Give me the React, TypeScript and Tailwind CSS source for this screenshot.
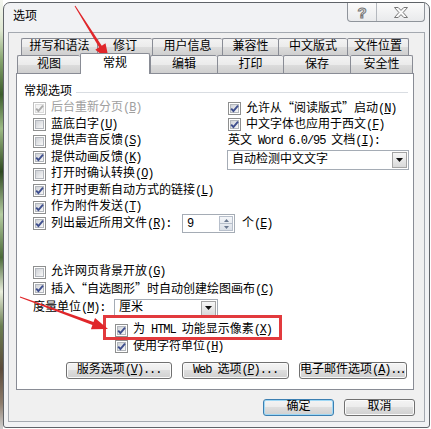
import type { ReactNode } from 'react';

const TOP_TABS = [
  { label: '拼写和语法', cls: 'w-[76px]' },
  { label: '修订', cls: 'w-[55px]' },
  { label: '用户信息', cls: 'w-[70px]' },
  { label: '兼容性', cls: 'w-[56px]' },
  { label: '中文版式', cls: 'w-[69px]' },
  { label: '文件位置', cls: 'w-[62px] border-r' },
];

const FRONT_TABS = [
  { label: '视图', cls: 'w-[63px]' },
  { label: '常规', cls: 'w-[70px]', active: true },
  { label: '编辑', cls: 'w-[67px]' },
  { label: '打印', cls: 'w-[66px]' },
  { label: '保存', cls: 'w-[67px]' },
  { label: '安全性', cls: 'w-[63px] border-r' },
];

// half-width latin run, SimSun style
function Lat({ children }: { children: ReactNode }) {
  return <span className="whitespace-pre text-[12px] tracking-[-1.1px]">{children}</span>;
}

function Key({ k }: { k: string }) {
  return (
    <Lat>
      (<span className="underline underline-offset-[1px]">{k}</span>)
    </Lat>
  );
}

function Q({ children }: { children: ReactNode }) {
  return <span className="font-['Noto_Sans_CJK_SC',sans-serif]">{children}</span>;
}

function Check({ on, dim }: { on?: boolean; dim?: boolean }) {
  return (
    <span
      className={`relative flex h-[13px] w-[13px] shrink-0 items-center justify-center border bg-white ${
        dim ? 'border-[#c0c0c0]' : 'border-[#8e8f8f]'
      }`}
    >
      <span
        className={`h-[9px] w-[9px] border ${
          dim ? 'border-[#dcdcdc] bg-[#f4f4f4]' : 'border-[#b3b7bd] bg-[linear-gradient(135deg,#cfd2d7,#f8f8f8)]'
        }`}
      />
      {on && (
        <svg className="absolute left-0 top-0" width="11" height="11" viewBox="0 0 11 11">
          <path d="M2.2 5.6 L4.4 8 L9 2.6" fill="none" stroke={dim ? '#aaaaaa' : '#3f4f8e'} strokeWidth="1.9" />
        </svg>
      )}
    </span>
  );
}

function Row({
  on,
  dim,
  children,
  className = '',
}: {
  on?: boolean;
  dim?: boolean;
  children: ReactNode;
  className?: string;
}) {
  return (
    <div className={`flex h-[16.5px] items-center gap-[5px] ${className}`}>
      <Check on={on} dim={dim} />
      <span className={`whitespace-nowrap ${dim ? 'text-[#a0a0a0]' : ''}`}>{children}</span>
    </div>
  );
}

function Arrow() {
  return (
    <svg width="7" height="4" viewBox="0 0 7 4">
      <path d="M0 0H7L3.5 4Z" fill="#111" />
    </svg>
  );
}

function Combo({ value, className = '' }: { value: string; className?: string }) {
  return (
    <div className={`flex shrink-0 border border-[#a5acb5] bg-white ${className}`}>
      <span className="flex flex-1 items-center pl-[4px] whitespace-nowrap">{value}</span>
      <span className="m-px flex w-[15px] items-center justify-center border border-[#a4a4a4] bg-[linear-gradient(#f7f7f7,#d9d9d9)]">
        <Arrow />
      </span>
    </div>
  );
}

function Spin() {
  return (
    <div className="flex h-[19px] w-[53px] shrink-0 border border-[#a5acb5] bg-white">
      <span className="flex flex-1 items-center pl-[4px]">
        <Lat>9</Lat>
      </span>
      <span className="m-px flex w-[14px] flex-col border border-[#b7bfcb] bg-[linear-gradient(#f4f6f9,#dbe0e8)]">
        <span className="flex flex-1 items-center justify-center border-b border-[#b7bfcb]">
          <svg width="5" height="3" viewBox="0 0 5 3">
            <path d="M0 3H5L2.5 0Z" fill="#6a7890" />
          </svg>
        </span>
        <span className="flex flex-1 items-center justify-center">
          <svg width="5" height="3" viewBox="0 0 5 3">
            <path d="M0 0H5L2.5 3Z" fill="#6a7890" />
          </svg>
        </span>
      </span>
    </div>
  );
}

function Btn({ children, className = '', def }: { children: ReactNode; className?: string; def?: boolean }) {
  return (
    <div
      className={`h-[17px] shrink-0 overflow-hidden whitespace-nowrap rounded-[3px] border text-center leading-[15px] bg-[linear-gradient(#f4f4f4,#ececec_50%,#dedede_50%,#d0d0d0)] ${
        def ? 'border-[#3c7fb1] shadow-[inset_0_0_0_1px_#9fd8f5]' : 'border-[#707070] shadow-[inset_0_0_0_1px_#fbfbfb]'
      } ${className}`}
    >
      {children}
    </div>
  );
}

export default function App() {
  return (
    <div className="relative flex h-[429px] w-[431px] overflow-hidden bg-white font-['Liberation_Mono','Noto_Sans_CJK_SC',monospace] text-[12px] leading-[14px] text-black">
      {/* desktop wallpaper peeking out on the left */}
      <div className="h-full w-[3px] shrink-0 bg-[linear-gradient(#f4f6ef_0%,#dfe8d2_7%,#86a56f_14%,#3c5d2d_22%,#9dbb86_30%,#2e4921_40%,#b5cda2_50%,#4b6a39_60%,#e9eedd_68%,#6b7f52_76%,#5b4b3a_86%,#8d7d6d_94%,#d0d0d0_100%)]" />

      <div className="mt-[2px] flex h-[426px] w-[427px] flex-col rounded-t-[7px] rounded-b-[3px] border border-[#5f6368] bg-[#f1f2f4] px-[4px] pb-[5px]">
        {/* caption */}
        <div className="flex h-[29px] shrink-0 items-start">
          <span className="pl-[5px] pt-[7px] text-[12px]">选项</span>
          <div className="ml-auto flex h-[19px] rounded-b-[4px] border border-t-0 border-[#8f949b] bg-[linear-gradient(#fbfbfb,#e9eaec)]">
            <div className="flex w-[29px] items-center justify-center border-r border-[#b4b8be]">
              <span className="font-['Liberation_Sans',sans-serif] text-[15px] font-bold leading-none text-[#f4f4f4] [-webkit-text-stroke:1px_#767676]">
                ?
              </span>
            </div>
            <div className="flex w-[47px] items-center justify-center">
              <svg width="14" height="11" viewBox="0 0 14 11">
                <path
                  d="M0.5 0.5H4.2L7 3.4L9.8 0.5H13.5L9.1 5.5L13.5 10.5H9.8L7 7.6L4.2 10.5H0.5L4.9 5.5Z"
                  fill="#fafafa"
                  stroke="#777"
                  strokeWidth="1"
                />
              </svg>
            </div>
          </div>
        </div>

        {/* client area */}
        <div className="flex flex-1 flex-col border border-[#a4a9b0] bg-[#f0f0f0] pl-[7px] pt-[5px]">
          <div className="flex w-[398px] flex-col">
            <div className="ml-[5px] flex h-[17px]">
              {TOP_TABS.map((t) => (
                <div
                  key={t.label}
                  className={`flex h-full items-center justify-center rounded-t-[2px] border-l border-t border-[#898c95] bg-[linear-gradient(#f3f3f3,#ebebeb_50%,#dddddd_50%,#cfcfcf)] ${t.cls}`}
                >
                  {t.label}
                </div>
              ))}
            </div>
            <div className="ml-[1px] flex h-[18px] items-end">
              {FRONT_TABS.map((t) =>
                t.active ? (
                  <div
                    key={t.label}
                    className={`relative z-10 -mb-px flex h-[21px] justify-center rounded-t-[2px] border-l border-r border-t border-[#898c95] bg-white pt-[3px] ${t.cls}`}
                  >
                    {t.label}
                  </div>
                ) : (
                  <div
                    key={t.label}
                    className={`flex h-full items-center justify-center rounded-t-[2px] border-l border-t border-[#898c95] bg-[linear-gradient(#f3f3f3,#ebebeb_50%,#dddddd_50%,#cfcfcf)] ${t.cls}`}
                  >
                    {t.label}
                  </div>
                ),
              )}
            </div>

            {/* 常规 page */}
            <div className="flex h-[317px] w-[398px] flex-col border border-[#898c95] bg-white">
              <div className="mt-[11px] flex h-[14px] items-center pl-[7px] pr-[5px]">
                <span>常规选项</span>
                <span className="ml-[4px] h-px flex-1 bg-[#d9dde2]" />
              </div>

              <div className="mt-[1px] flex">
                <div className="w-[211px] shrink-0 pl-[16px]">
                  <Row on dim>
                    后台重新分页<Key k="B" />
                  </Row>
                  <Row>
                    蓝底白字<Key k="U" />
                  </Row>
                  <Row>
                    提供声音反馈<Key k="S" />
                  </Row>
                  <Row on>
                    提供动画反馈<Key k="K" />
                  </Row>
                  <Row>
                    打开时确认转换<Key k="O" />
                  </Row>
                  <Row on>
                    打开时更新自动方式的链接<Key k="L" />
                  </Row>
                  <Row on>
                    作为附件发送<Key k="T" />
                  </Row>
                  <div className="flex h-[16.5px] items-center gap-[5px]">
                    <Check on />
                    <span className="w-[126px] shrink-0 whitespace-nowrap">
                      列出最近所用文件<Key k="R" />
                      <Lat>:</Lat>
                    </span>
                    <Spin />
                    <span className="ml-[2px] whitespace-nowrap">
                      个<Key k="E" />
                    </span>
                  </div>
                </div>

                <div className="flex flex-col">
                  <Row on>
                    允许从<Q>“</Q>阅读版式<Q>”</Q>启动<Key k="N" />
                  </Row>
                  <Row on>
                    中文字体也应用于西文<Key k="F" />
                  </Row>
                  <div className="flex h-[16.5px] items-center whitespace-nowrap">
                    英文<Lat>{' Word 6.0/95 '}</Lat>文档<Key k="I" />
                    <Lat>:</Lat>
                  </div>
                  <Combo value="自动检测中文文字" className="-ml-px h-[20px] w-[182px]" />
                </div>
              </div>

              <div className="mt-[32px] flex flex-col pl-[16px]">
                <Row>
                  允许网页背景开放<Key k="G" />
                </Row>
                <Row on>
                  插入<Q>“</Q>自选图形<Q>”</Q>时自动创建绘图画布<Key k="C" />
                </Row>
                <div className="mt-[1px] flex h-[20px] items-center">
                  <span className="w-[81px] shrink-0 whitespace-nowrap">
                    度量单位<Key k="M" />
                    <Lat>:</Lat>
                  </span>
                  <Combo value="厘米" className="h-[19px] w-[104px]" />
                </div>
                <Row on className="ml-[82px] mt-[4px]">
                  为<Lat>{' HTML '}</Lat>功能显示像素<Key k="X" />
                </Row>
                <Row on className="ml-[82px]">
                  使用字符单位<Key k="H" />
                </Row>
              </div>

              <div className="ml-[49px] mt-[7px] flex gap-[10px]">
                <Btn className="w-[106px]">
                  服务选项<Key k="V" />
                  <Lat>...</Lat>
                </Btn>
                <Btn className="w-[107px]">
                  <Lat>{'Web '}</Lat>选项<Key k="P" />
                  <Lat>...</Lat>
                </Btn>
                <Btn className="w-[108px] text-left">
                  电子邮件选项<Key k="A" />
                  <span className="whitespace-pre text-[12px] tracking-[-2.6px]">...</span>
                </Btn>
              </div>
            </div>

            <div className="mt-[9px] flex justify-end gap-[10px]">
              <Btn def className="w-[71px]">
                确定
              </Btn>
              <Btn className="-mr-px w-[71px]">取消</Btn>
            </div>
          </div>
        </div>
      </div>

      {/* red callouts drawn on top of the dialog */}
      <svg className="pointer-events-none absolute left-0 top-0" width="431" height="429" viewBox="0 0 431 429">
        <rect x="104.5" y="316.5" width="176" height="22" fill="none" stroke="#e23a3d" strokeWidth="3" />
        <polygon
          points="74.6,6.3 99.05,47.36 95.3,49.7 109,60 105.5,43.3 101.75,45.64 75.4,5.7"
          fill="#e0262a"
        />
        <polygon
          points="19.86,297.38 92.41,325.03 90.91,329.17 108,329 95.01,317.89 93.51,322.03 20.14,296.62"
          fill="#e0262a"
        />
      </svg>
    </div>
  );
}
